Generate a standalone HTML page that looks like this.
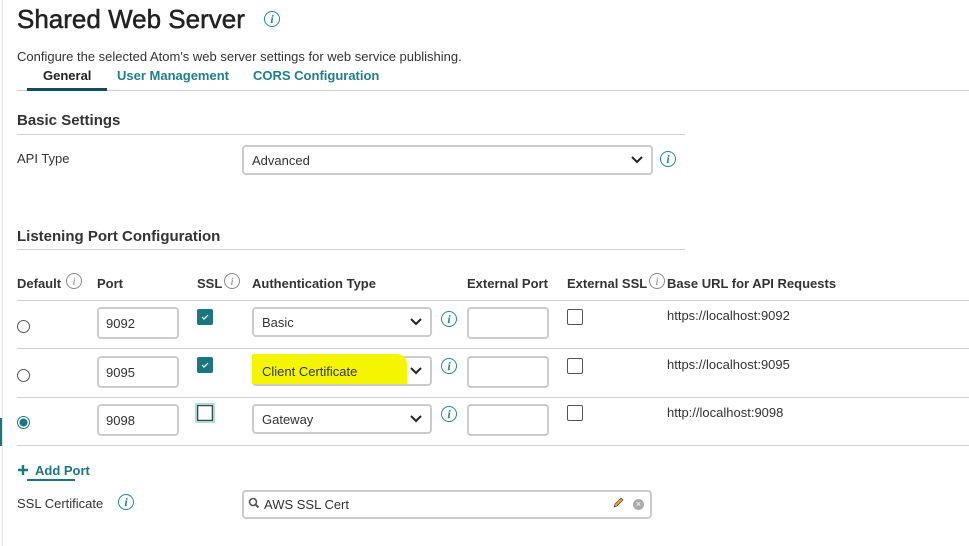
<!DOCTYPE html>
<html><head><style>
*{box-sizing:border-box;margin:0;padding:0}
body{width:969px;height:546px;background:#fff;font-family:"Liberation Sans",sans-serif;color:#333;position:relative;overflow:hidden;font-size:13px}
.a{position:absolute;white-space:nowrap}
.info{position:absolute;width:16px;height:16px;border:1.3px solid #1f8a94;border-radius:50%;color:#1f8a94;font:italic bold 12px "Liberation Serif",serif;text-align:center;line-height:14px}
.info.g{border-color:#888;color:#888;font-weight:normal}
.hl{position:absolute;height:1px;background:#d0d0d0}
.box{position:absolute;border:2px solid #ccc;border-radius:4px;background:#fff}
.sel{position:absolute;border:2px solid #ccc;border-radius:4px;background:#fff;font-size:13px;padding-left:8px;line-height:28px}
.chev{position:absolute;right:8px;top:8px}
.cb{position:absolute;width:16px;height:16px;border:1.3px solid #555;border-radius:2px;background:#fff}
.cb.on{background:#1b7681;border-color:#1b7681}
.rad{position:absolute;width:13px;height:13px;border:1px solid #555;border-radius:50%}
</style></head><body>
<div class="a" style="left:2px;top:0;width:1px;height:546px;background:#e3e3e3"></div>
<div class="a" style="left:0;top:418px;width:2px;height:28px;background:#1b7681"></div>
<div class="a" style="left:17px;top:4px;font-size:26px;color:#222;-webkit-text-stroke:0.5px #222">Shared Web Server</div>
<div class="info" style="left:264px;top:11px">i</div>
<div class="a" style="left:17px;top:49px;font-size:13px;color:#333">Configure the selected Atom's web server settings for web service publishing.</div>
<div class="a" style="left:43px;top:68px;font-size:13px;color:#222;font-weight:bold">General</div>
<div class="a" style="left:117px;top:68px;font-size:13px;color:#1f7f8a;font-weight:bold">User Management</div>
<div class="a" style="left:253px;top:68px;font-size:13px;color:#1f7f8a;font-weight:bold">CORS Configuration</div>
<div class="hl" style="left:17px;top:90px;width:952px;background:#ccc"></div>
<div class="a" style="left:27px;top:88px;width:80px;height:3px;background:#124c5c"></div>
<div class="a" style="left:17px;top:112px;font-size:15px;font-weight:bold;color:#333">Basic Settings</div>
<div class="hl" style="left:17px;top:134px;width:668px"></div>
<div class="a" style="left:17px;top:151px">API Type</div>
<div class="sel" style="left:242px;top:145px;width:411px;height:30px">Advanced<svg class="chev" width="12" height="10" viewBox="0 0 12 10"><path d="M1 2l5 5 5-5" stroke="#222" stroke-width="2" fill="none"/></svg></div>
<div class="info" style="left:660px;top:151px">i</div>
<div class="a" style="left:17px;top:228px;font-size:15px;font-weight:bold;color:#333">Listening Port Configuration</div>
<div class="hl" style="left:17px;top:249px;width:668px"></div>
<div class="a" style="left:17px;top:276px;font-weight:bold">Default</div><div class="info g" style="left:66px;top:273px">i</div>
<div class="a" style="left:97px;top:276px;font-weight:bold">Port</div>
<div class="a" style="left:197px;top:276px;font-weight:bold">SSL</div><div class="info g" style="left:224px;top:273px">i</div>
<div class="a" style="left:252px;top:276px;font-weight:bold">Authentication Type</div>
<div class="a" style="left:467px;top:276px;font-weight:bold">External Port</div>
<div class="a" style="left:567px;top:276px;font-weight:bold">External SSL</div><div class="info g" style="left:649px;top:273px">i</div>
<div class="a" style="left:667px;top:276px;font-weight:bold">Base URL for API Requests</div>
<div class="hl" style="left:17px;top:300px;width:952px"></div>
<div class="hl" style="left:17px;top:348px;width:952px"></div>
<div class="hl" style="left:17px;top:397px;width:952px"></div>
<div class="hl" style="left:17px;top:445px;width:952px"></div>

<div class="rad" style="left:17px;top:320px"></div>
<div class="box" style="left:97px;top:307px;width:82px;height:32px;padding:7px 0 0 7px">9092</div>
<div class="cb on" style="left:197px;top:309px"><svg width="14" height="14"><path d="M4 7l2 2 4-4" stroke="#fff" stroke-width="1.2" fill="none"/></svg></div>
<div class="sel" style="left:252px;top:307px;width:180px;height:30px">Basic<svg class="chev" width="12" height="10" viewBox="0 0 12 10"><path d="M1 2l5 5 5-5" stroke="#222" stroke-width="2" fill="none"/></svg></div>
<div class="info" style="left:441px;top:311px">i</div>
<div class="box" style="left:467px;top:307px;width:82px;height:32px"></div>
<div class="cb" style="left:567px;top:309px"></div>
<div class="a" style="left:667px;top:308px">https://localhost:9092</div>

<div class="rad" style="left:17px;top:369px"></div>
<div class="box" style="left:97px;top:356px;width:82px;height:32px;padding:7px 0 0 7px">9095</div>
<div class="cb on" style="left:197px;top:357px"><svg width="14" height="14"><path d="M4 7l2 2 4-4" stroke="#fff" stroke-width="1.2" fill="none"/></svg></div>
<div class="sel" style="left:252px;top:356px;width:180px;height:30px"><span class="a" style="left:-2px;top:-4px;width:155px;height:30px;background:#f5f500;border-radius:2px 10px 0 0"></span><span style="position:relative">Client Certificate</span><svg class="chev" width="12" height="10" viewBox="0 0 12 10"><path d="M1 2l5 5 5-5" stroke="#222" stroke-width="2" fill="none"/></svg></div>
<div class="info" style="left:441px;top:358px">i</div>
<div class="box" style="left:467px;top:356px;width:82px;height:32px"></div>
<div class="cb" style="left:567px;top:358px"></div>
<div class="a" style="left:667px;top:357px">https://localhost:9095</div>

<div class="rad" style="left:17px;top:416px;border:1px solid #1b7681;background:radial-gradient(circle,#1b7681 3.5px,#fff 4.5px)"></div>
<div class="box" style="left:97px;top:404px;width:82px;height:32px;padding:7px 0 0 7px">9098</div>
<div class="cb" style="left:195px;top:403px;width:20px;height:20px;border:2px solid #a8dcdc;box-shadow:inset 0 0 0 1.3px #444"></div>
<div class="sel" style="left:252px;top:404px;width:180px;height:30px">Gateway<svg class="chev" width="12" height="10" viewBox="0 0 12 10"><path d="M1 2l5 5 5-5" stroke="#222" stroke-width="2" fill="none"/></svg></div>
<div class="info" style="left:441px;top:406px">i</div>
<div class="box" style="left:467px;top:404px;width:82px;height:32px"></div>
<div class="cb" style="left:567px;top:405px"></div>
<div class="a" style="left:667px;top:405px">http://localhost:9098</div>

<svg class="a" style="left:17px;top:464px" width="12" height="12"><path d="M6 1v10M1 6h10" stroke="#1b7681" stroke-width="2.4"/></svg>
<div class="a" style="left:35px;top:463px;font-weight:bold;color:#1b7681">Add Port</div>
<div class="a" style="left:27px;top:479px;width:48px;height:2px;background:#1b7681"></div>
<div class="a" style="left:17px;top:496px">SSL Certificate</div>
<div class="info" style="left:118px;top:494px">i</div>
<div class="box" style="left:242px;top:490px;width:410px;height:29px"></div>
<svg class="a" style="left:248px;top:497px" width="12" height="12"><circle cx="5" cy="5" r="3.5" stroke="#555" stroke-width="1.6" fill="none"/><path d="M7.5 7.5l3 3" stroke="#555" stroke-width="2"/></svg>
<div class="a" style="left:264px;top:497px">AWS SSL Cert</div>
<svg class="a" style="left:612px;top:497px" width="12" height="12"><path d="M2 10l1-3 6-6 2 2-6 6z" fill="#f0a030" stroke="#333" stroke-width=".6"/></svg>
<div class="a" style="left:633px;top:499px;width:11px;height:11px;border-radius:50%;background:#aaa;color:#fff;font-size:9px;line-height:11px;text-align:center">×</div>
</body></html>
